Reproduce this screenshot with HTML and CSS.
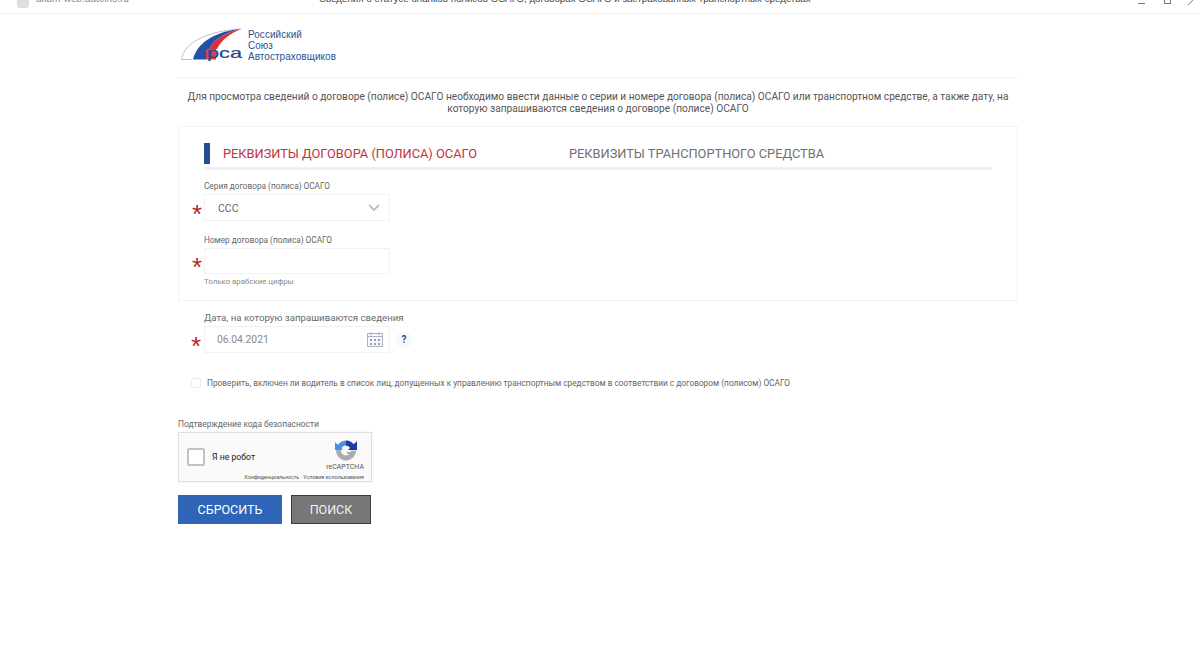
FILE: index.html
```html
<!DOCTYPE html>
<html lang="ru">
<head>
<meta charset="utf-8">
<title>Сведения о статусе бланков полисов ОСАГО</title>
<link rel="stylesheet" href="styles.css">
</head>
<body>
<div class="chrome">
  <div class="chrome-left">
    <span class="favicon"></span>
    <span class="url">akbm-web.autoins.ru</span>
  </div>
  <div class="chrome-title">Сведения о статусе бланков полисов ОСАГО, договорах ОСАГО и застрахованных транспортных средствах</div>
  <div class="chrome-controls">
    <span class="ctl-min"></span>
    <span class="ctl-restore"></span>
    <span class="ctl-close"></span>
  </div>
</div>
<main class="page">
  <header class="head">
    <svg class="logo-mark" width="62" height="34" viewBox="0 0 62 34" aria-hidden="true">
      <path d="M0.5 31.5 C3 15 25 3 60 1" fill="none" stroke="#b4b8c2" stroke-width="0.9"/>
      <path d="M0.5 31.5H11" stroke="#b4b8c2" stroke-width="0.9"/>
      <path d="M60 1 C38 3 17 12 12 31.5 L25 31.5 L25 21 L28 21 C33 11 46 4 60 1Z" fill="#2450a8"/>
      <path d="M60 1 C46 4 33 11 28 21 L36 21 C40 12 50 5 60 1Z" fill="#dc2f3a"/>
      <rect x="25" y="21" width="10" height="10.5" fill="#d8404a"/>
      <text class="logo-rsa" x="26" y="30" textLength="35" lengthAdjust="spacingAndGlyphs">рса</text>
    </svg>
    <div class="logo-text">Российский<br>Союз<br>Автостраховщиков</div>
  </header>
  <p class="intro">Для просмотра сведений о договоре (полисе) ОСАГО необходимо ввести данные о серии и номере договора (полиса) ОСАГО или транспортном средстве, а также дату, на которую запрашиваются сведения о договоре (полисе) ОСАГО</p>
  <section class="card">
    <div class="tabs">
      <div class="tab tab-active">РЕКВИЗИТЫ ДОГОВОРА (ПОЛИСА) ОСАГО</div>
      <div class="tab tab-other">РЕКВИЗИТЫ ТРАНСПОРТНОГО СРЕДСТВА</div>
    </div>
    <label class="label label-first">Серия договора (полиса) ОСАГО</label>
    <div class="row">
      <span class="star">*</span>
      <div class="field field-select">
        <span>ССС</span>
        <svg width="12" height="7" viewBox="0 0 12 7" aria-hidden="true"><path d="M1 1l5 5 5-5" fill="none" stroke="#a9b1bf" stroke-width="1.5"/></svg>
      </div>
    </div>
    <label class="label label-second">Номер договора (полиса) ОСАГО</label>
    <div class="row">
      <span class="star">*</span>
      <div class="field field-number"></div>
    </div>
    <div class="hint">Только арабские цифры</div>
  </section>
  <section class="date-block">
    <label class="label label-date">Дата, на которую запрашиваются сведения</label>
    <div class="row">
      <span class="star">*</span>
      <div class="field field-date">
        <span>06.04.2021</span>
        <svg width="16" height="15" viewBox="0 0 16 15" aria-hidden="true">
          <rect x="0.5" y="1.5" width="15" height="13" fill="#f4f6f9" stroke="#a8b3c3"/>
          <path d="M0.5 4.5h15M4 0v3M12 0v3" stroke="#a8b3c3" fill="none"/>
          <path d="M3 7h2v2H3zM7 7h2v2H7zM11 7h2v2h-2zM3 11h2v2H3zM7 11h2v2h-2zM11 11h2v2h-2z" fill="#95a2b5"/>
        </svg>
      </div>
      <span class="help">?</span>
    </div>
  </section>
  <div class="check-row">
    <span class="checkbox"></span>
    <span class="check-text">Проверить, включен ли водитель в список лиц, допущенных к управлению транспортным средством в соответствии с договором (полисом) ОСАГО</span>
  </div>
  <div class="captcha-label">Подтверждение кода безопасности</div>
  <div class="captcha">
    <span class="captcha-box"></span>
    <span class="captcha-text">Я не робот</span>
    <div class="captcha-brand">
      <svg class="rc-icon" width="22" height="21" viewBox="0 0 22 21" aria-hidden="true">
        <path d="M3.5 10.5A7.5 7.5 0 0 1 11 3" fill="none" stroke="#4a90e2" stroke-width="5"/>
        <path d="M11 3A7.5 7.5 0 0 1 17.5 7" fill="none" stroke="#1c3aa9" stroke-width="5"/>
        <path d="M18.5 10.5A7.5 7.5 0 0 1 3.5 10.5" fill="none" stroke="#ababab" stroke-width="5"/>
        <path d="M22 1v9h-9z" fill="#1c3aa9"/>
        <path d="M0 2v8h8z" fill="#4a90e2"/>
        <path d="M12 12h6v2h-6z" fill="#ababab"/>
      </svg>
      <div class="brand-name">reCAPTCHA</div>
      <div class="brand-links">Конфиденциальность · Условия использования</div>
    </div>
  </div>
  <div class="buttons">
    <button class="btn btn-reset" type="button">СБРОСИТЬ</button>
    <button class="btn btn-search" type="button">ПОИСК</button>
  </div>
</main>
</body>
</html>
```
FILE: styles.css
```css
* { box-sizing: border-box; }
html, body { margin: 0; padding: 0; }
body {
  width: 1200px;
  height: 645px;
  overflow: hidden;
  background: #fff;
  font-family: Roboto, "Liberation Sans", sans-serif;
  color: #555;
}
.chrome {
  height: 14px;
  border-bottom: 1px solid #efefef;
  display: flex;
  overflow: hidden;
  font-family: "Liberation Sans", sans-serif;
  font-size: 10px;
  line-height: 12px;
}
.chrome-left { width: 319px; display: flex; align-items: flex-start; padding-left: 17px; gap: 7px; }
.favicon { width: 12px; height: 8px; background: #dfdfdf; border-radius: 0 0 3px 3px; }
.url { margin-top: -7px; color: #8a8a8a; }
.chrome-title { width: 491px; margin-top: -7px; white-space: nowrap; color: #444; font-size: 9.77px; }
.chrome-controls { flex: 1; display: flex; padding-left: 328px; gap: 19px; }
.ctl-min { width: 7px; height: 1px; margin-top: 3px; background: #777; }
.ctl-restore { width: 7px; height: 4px; border: 1px solid #777; border-top: 0; }
.ctl-close { width: 6px; height: 5px; border-left: 1px solid #777; transform: skewX(-45deg); }

.page { width: 840px; margin-left: 178px; }
.head {
  height: 64px;
  border-bottom: 1px solid #f1f1f1;
  display: flex;
  padding: 14px 0 0 3px;
  gap: 5px;
}
.logo-mark { flex: none; }
.logo-rsa { font: 400 15px "Liberation Sans", sans-serif; fill: #23468f; stroke: #23468f; stroke-width: 0.2; }
.logo-text {
  font-family: "Liberation Sans", sans-serif;
  font-size: 11px;
  line-height: 11px;
  color: #2b5191;
  white-space: nowrap;
  padding-top: 1px;
  letter-spacing: 0.1px;
  transform: scaleX(0.9);
  transform-origin: left top;
}
.intro {
  margin: 0;
  height: 48px;
  padding: 13px 0 0;
  font-size: 10.17px;
  line-height: 12px;
  text-align: center;
  color: #555;
}
.card {
  height: 175px;
  border: 1px solid #f3f3f3;
  padding: 16px 25px 0 13px;
}
.tabs {
  display: flex;
  align-items: flex-start;
  margin-left: 12px;
  height: 27px;
  border-bottom: 3px solid #f0f0f0;
  font-size: 12.8px;
  line-height: 21px;
}
.tab { white-space: nowrap; }
.tab-active {
  width: 365px;
  border-left: 6px solid #24508f;
  padding-left: 13px;
  color: #c0323a;
}
.tab-other { color: #707070; }
.label { display: block; margin-left: 12px; font-size: 8.25px; line-height: 10px; color: #666; }
.label-first { margin-top: 11px; }
.label-second { margin-top: 14px; }
.row { display: flex; align-items: center; margin-top: 3px; }
.star {
  width: 12px;
  height: 26px;
  font: 400 26px/38px "Liberation Sans", sans-serif;
  color: #b5282e;
}
.field {
  width: 186px;
  height: 27px;
  border: 1px solid #f2f2f2;
  display: flex;
  align-items: center;
  justify-content: space-between;
  padding: 0 9px 0 13px;
  font-size: 10.5px;
  color: #666;
}
.field-select span { padding-top: 1px; }
.field-number { height: 26px; }
.hint { margin: 3px 0 0 12px; font-size: 7.85px; line-height: 10px; color: #888; }
.date-block { padding-left: 13px; margin-top: 12px; }
.label-date { font-size: 9.7px; margin-left: 13px; color: #6a6a6a; }
.date-block .star { width: 13px; }
.field-date { color: #888; padding: 0 6px 0 12px; font-size: 10.3px; }
.help {
  margin-left: 6px;
  width: 16px;
  height: 16px;
  line-height: 16px;
  border-radius: 50%;
  background: #f6f8fb;
  text-align: center;
  font-size: 10px;
  font-weight: 700;
  color: #2e4d85;
}
.check-row { display: flex; align-items: center; margin: 25px 0 0 13px; gap: 6px; }
.checkbox { width: 10px; height: 10px; border: 1px solid #ededed; border-radius: 2px; }
.check-text { font-size: 8.32px; line-height: 10px; color: #666; white-space: nowrap; }
.captcha-label { margin-top: 31px; font-size: 8.4px; line-height: 10px; color: #666; }
.captcha {
  margin-top: 3px;
  width: 194px;
  height: 50px;
  border: 1px solid #dedede;
  background: #fafafa;
  box-shadow: 0 0 2px rgba(0,0,0,.08);
  display: flex;
  align-items: center;
  padding-left: 8px;
  position: relative;
}
.captcha-box { width: 18px; height: 18px; border: 2px solid #c1c1c1; border-radius: 2px; background: #fff; }
.captcha-text { margin-left: 7px; font-size: 8.7px; color: #222; }
.captcha-brand {
  position: absolute;
  right: 7px;
  top: 7px;
  display: flex;
  flex-direction: column;
  align-items: flex-end;
}
.rc-icon { margin-right: 7px; }
.brand-name { margin-top: 2px; font-size: 7px; line-height: 8px; color: #555; }
.brand-links { margin-top: 3px; font-size: 5.3px; line-height: 6px; color: #555; white-space: nowrap; }
.buttons { display: flex; gap: 9px; margin-top: 13px; }
.btn {
  height: 29px;
  border: 0;
  padding: 0;
  font-family: Roboto, sans-serif;
  font-size: 12.5px;
  color: #fff;
}
.btn-reset { width: 104px; background: #2f64b6; }
.btn-search { width: 80px; background: #777; border: 1px solid #3d3d3d; color: #f2f2f2; }
```
